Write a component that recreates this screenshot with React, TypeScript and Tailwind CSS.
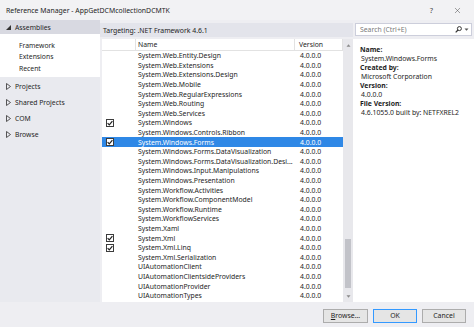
import { X } from "lucide-react";

const rows: { name: string; checked?: boolean; selected?: boolean }[] = [
	{ name: "System.Web.Entity.Design" },
	{ name: "System.Web.Extensions" },
	{ name: "System.Web.Extensions.Design" },
	{ name: "System.Web.Mobile" },
	{ name: "System.Web.RegularExpressions" },
	{ name: "System.Web.Routing" },
	{ name: "System.Web.Services" },
	{ name: "System.Windows", checked: true },
	{ name: "System.Windows.Controls.Ribbon" },
	{ name: "System.Windows.Forms", checked: true, selected: true },
	{ name: "System.Windows.Forms.DataVisualization" },
	{ name: "System.Windows.Forms.DataVisualization.Desi..." },
	{ name: "System.Windows.Input.Manipulations" },
	{ name: "System.Windows.Presentation" },
	{ name: "System.Workflow.Activities" },
	{ name: "System.Workflow.ComponentModel" },
	{ name: "System.Workflow.Runtime" },
	{ name: "System.WorkflowServices" },
	{ name: "System.Xaml" },
	{ name: "System.Xml", checked: true },
	{ name: "System.Xml.Linq", checked: true },
	{ name: "System.Xml.Serialization" },
	{ name: "UIAutomationClient" },
	{ name: "UIAutomationClientsideProviders" },
	{ name: "UIAutomationProvider" },
	{ name: "UIAutomationTypes" },
];

function Check() {
	return (
		<div className="flex h-[8px] w-[8px] items-center justify-center border border-[#3c3c3c] bg-white">
			<svg width="6" height="6" viewBox="0 0 6 6">
				<path d="M0.6 3.1 L2.3 4.8 L5.4 1.2" fill="none" stroke="#1e1e1e" strokeWidth="1.2" />
			</svg>
		</div>
	);
}

function Collapsed() {
	return (
		<svg width="5" height="7" viewBox="0 0 5 7" className="mr-[4px]">
			<path d="M0.5 0.5 L4.5 3.5 L0.5 6.5 Z" fill="none" stroke="#444" strokeWidth="0.9" />
		</svg>
	);
}

function Detail({ label, value }: { label: string; value: string }) {
	return (
		<>
			<div className="h-[9px] font-bold">{label}</div>
			<div className="h-[9px] pl-[1px]">{value}</div>
		</>
	);
}

export default function App() {
	return (
		<div className="flex h-[327px] w-[474px] flex-col overflow-hidden bg-[#eeeef2] font-['Noto_Sans',sans-serif] text-[6.85px] leading-[9px] text-[#1e1e1e]">
			{/* title bar */}
			<div className="flex h-[20px] items-center bg-[#f2f2f4] pl-[6px] text-[6.9px]">
				<span className="flex-1">Reference Manager - AppGetDCMcollectionDCMTK</span>
				<span className="mr-[20px] text-[7.5px] text-[#444]">?</span>
				<X size={9} strokeWidth={1.3} className="mr-[12px] text-[#444]" />
			</div>

			<div className="flex h-[282px]">
				{/* left nav */}
				<div className="flex w-[100px] flex-col bg-[#e9eaef] text-[6.8px]">
					<div className="flex h-[14px] items-center bg-[#d8d9e1] pl-[6px]">
						<svg width="5" height="5" viewBox="0 0 5 5" className="mr-[4px]">
							<path d="M5 0 L5 5 L0 5 Z" fill="#333" />
						</svg>
						Assemblies
					</div>
					<div className="flex flex-col bg-white pb-[3px] pl-[19px] pt-[6px] leading-[11.3px]">
						<div>Framework</div>
						<div>Extensions</div>
						<div>Recent</div>
					</div>
					<div className="flex flex-col pl-[6px] pt-[2px] leading-[16px]">
						{["Projects", "Shared Projects", "COM", "Browse"].map(t => (
							<div key={t} className="flex items-center">
								<Collapsed />
								{t}
							</div>
						))}
					</div>
				</div>

				{/* main */}
				<div className="flex flex-1 flex-col">
					<div className="flex h-[19px] items-start pt-[3px]">
						<div className="flex h-[14px] w-[253px] items-center bg-[#e3e4eb] pl-[3px] text-[6.9px]">
							Targeting: .NET Framework 4.6.1
						</div>
						<div className="ml-[2px] flex h-[13px] w-[117px] items-center border border-[#cccedb] bg-white pl-[4px] pr-[2px] text-[#7a7a7a]">
							<span className="flex-1">Search (Ctrl+E)</span>
							<svg width="7" height="7" viewBox="0 0 7 7">
								<circle cx="4.4" cy="2.6" r="2" fill="none" stroke="#333" strokeWidth="1" />
								<path d="M3 4 L0.7 6.3" stroke="#333" strokeWidth="1.2" />
							</svg>
							<svg width="5" height="3" viewBox="0 0 5 3" className="ml-[2px]">
								<path d="M0.5 0.5 L4.5 0.5 L2.5 2.8 Z" fill="#555" />
							</svg>
						</div>
					</div>

					<div className="flex flex-1 pl-[2px]">
						{/* grid */}
						<div className="flex h-[263px] w-[251px] bg-white">
							<div className="flex w-[241px] flex-col">
								<div className="flex h-[12px] border-b border-[#e2e2e2]">
									<div className="w-[34px] border-r border-[#e2e2e2]" />
									<div className="flex w-[159px] items-center border-r border-[#e2e2e2] pl-[2px]">Name</div>
									<div className="flex flex-1 items-center border-r border-[#e2e2e2] pl-[4px]">Version</div>
								</div>
								{rows.map(r => (
									<div
										key={r.name}
										className={
											r.selected
												? "flex h-[9.6px] items-center bg-[#2f88e6] text-white"
												: "flex h-[9.6px] items-center"
										}
									>
										<div className="flex w-[34px] items-center pl-[4px]">{r.checked && <Check />}</div>
										<div className="w-[159px] overflow-hidden whitespace-nowrap pl-[2px]">{r.name}</div>
										<div className="flex-1 pl-[5px]">4.0.0.0</div>
									</div>
								))}
							</div>
							{/* scrollbar */}
							<div className="flex w-[10px] flex-col items-center bg-[#e8e8ec] pt-[5px]">
								<svg width="5" height="3" viewBox="0 0 5 3">
									<path d="M0.5 2.7 L4.5 2.7 L2.5 0.3 Z" fill="#8a8a8a" />
								</svg>
								<div className="flex-1" />
								<div className="mb-[7px] h-[49px] w-[6px] bg-[#c2c3c9]" />
								<svg width="5" height="3" viewBox="0 0 5 3" className="mb-[4px]">
									<path d="M0.5 0.3 L4.5 0.3 L2.5 2.7 Z" fill="#8a8a8a" />
								</svg>
							</div>
						</div>

						{/* details */}
						<div className="flex h-[263px] flex-1 flex-col bg-white pl-[7px] pt-[6px]">
							<Detail label="Name:" value="System.Windows.Forms" />
							<Detail label="Created by:" value="Microsoft Corporation" />
							<Detail label="Version:" value="4.0.0.0" />
							<Detail label="File Version:" value="4.6.1055.0 built by: NETFXREL2" />
						</div>
					</div>
				</div>
			</div>

			{/* footer */}
			<div className="flex h-[25px] items-center justify-end gap-[5px] pr-[8px] pt-[2px] text-[6.9px]">
				<button className="flex h-[14px] w-[45px] items-center justify-center border border-[#acacac] bg-[#e5e5e5]">
					<span>
						<span className="underline">B</span>rowse...
					</span>
				</button>
				<button className="flex h-[14px] w-[44px] items-center justify-center border border-[#3399ff] bg-[#e5e5e5]">
					OK
				</button>
				<button className="flex h-[14px] w-[44px] items-center justify-center border border-[#acacac] bg-[#e5e5e5]">
					Cancel
				</button>
			</div>
		</div>
	);
}
